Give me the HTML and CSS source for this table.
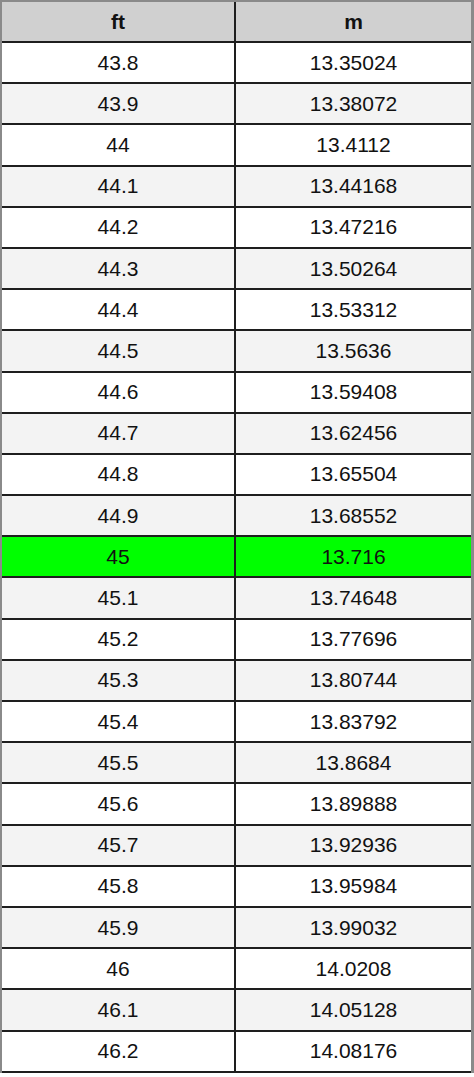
FILE: index.html
```html
<!DOCTYPE html>
<html>
<head>
<meta charset="utf-8">
<link rel="stylesheet" href="styles.css">
</head>
<body>
<div class="table">
  <div class="row head"><div class="cell">ft</div><div class="cell">m</div></div>
  <div class="row"><div class="cell">43.8</div><div class="cell">13.35024</div></div>
  <div class="row alt"><div class="cell">43.9</div><div class="cell">13.38072</div></div>
  <div class="row"><div class="cell">44</div><div class="cell">13.4112</div></div>
  <div class="row alt"><div class="cell">44.1</div><div class="cell">13.44168</div></div>
  <div class="row"><div class="cell">44.2</div><div class="cell">13.47216</div></div>
  <div class="row alt"><div class="cell">44.3</div><div class="cell">13.50264</div></div>
  <div class="row"><div class="cell">44.4</div><div class="cell">13.53312</div></div>
  <div class="row alt"><div class="cell">44.5</div><div class="cell">13.5636</div></div>
  <div class="row"><div class="cell">44.6</div><div class="cell">13.59408</div></div>
  <div class="row alt"><div class="cell">44.7</div><div class="cell">13.62456</div></div>
  <div class="row"><div class="cell">44.8</div><div class="cell">13.65504</div></div>
  <div class="row alt"><div class="cell">44.9</div><div class="cell">13.68552</div></div>
  <div class="row hl"><div class="cell">45</div><div class="cell">13.716</div></div>
  <div class="row alt"><div class="cell">45.1</div><div class="cell">13.74648</div></div>
  <div class="row"><div class="cell">45.2</div><div class="cell">13.77696</div></div>
  <div class="row alt"><div class="cell">45.3</div><div class="cell">13.80744</div></div>
  <div class="row"><div class="cell">45.4</div><div class="cell">13.83792</div></div>
  <div class="row alt"><div class="cell">45.5</div><div class="cell">13.8684</div></div>
  <div class="row"><div class="cell">45.6</div><div class="cell">13.89888</div></div>
  <div class="row alt"><div class="cell">45.7</div><div class="cell">13.92936</div></div>
  <div class="row"><div class="cell">45.8</div><div class="cell">13.95984</div></div>
  <div class="row alt"><div class="cell">45.9</div><div class="cell">13.99032</div></div>
  <div class="row"><div class="cell">46</div><div class="cell">14.0208</div></div>
  <div class="row alt"><div class="cell">46.1</div><div class="cell">14.05128</div></div>
  <div class="row"><div class="cell">46.2</div><div class="cell">14.08176</div></div>
</div>
</body>
</html>
```

FILE: styles.css
```css
html, body {
  margin: 0;
  padding: 0;
  background: #ffffff;
}
.table {
  width: 474px;
  box-sizing: border-box;
  border-top: 2px solid #8a8a8a;
  border-left: 2px solid #8a8a8a;
  border-right: 3px solid #8a8a8a;
  font-family: "Liberation Sans", Arial, sans-serif;
  font-size: 21px;
  color: #111111;
}
.row {
  display: grid;
  grid-template-columns: 234px 1fr;
  height: 41.2px;
  box-sizing: border-box;
  border-bottom: 2px solid #1e1e1e;
  background: #ffffff;
}
.row.alt {
  background: #f3f3f3;
}
.row.hl {
  background: #00ff00;
}
.row.head {
  height: 41px;
  background: #d0d0d0;
  font-weight: bold;
}
.cell {
  display: flex;
  align-items: center;
  justify-content: center;
}
.cell:first-child {
  border-right: 2px solid #1e1e1e;
}
```
